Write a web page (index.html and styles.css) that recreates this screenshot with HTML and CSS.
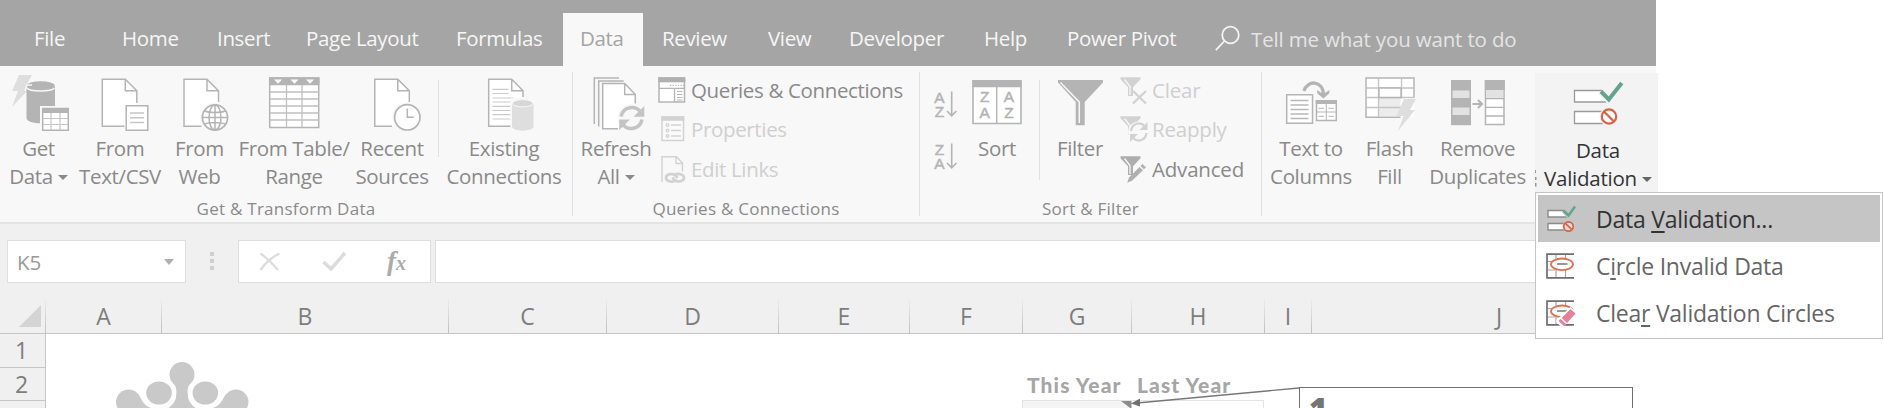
FILE: index.html
```html
<!DOCTYPE html>
<html lang="en">
<head>
    <meta charset="UTF-8">
    <meta name="viewport" content="width=device-width, initial-scale=1.0">
    <title>Data Validation</title>
    <link rel="stylesheet" href="styles.css">
</head>
<body>
    <div class="window">
        <nav class="tabs">
            <a class="tab tab-file">File</a>
            <a class="tab tab-home">Home</a>
            <a class="tab tab-insert">Insert</a>
            <a class="tab tab-layout">Page Layout</a>
            <a class="tab tab-formulas">Formulas</a>
            <a class="tab tab-data active">Data</a>
            <a class="tab tab-review">Review</a>
            <a class="tab tab-view">View</a>
            <a class="tab tab-developer">Developer</a>
            <a class="tab tab-help">Help</a>
            <a class="tab tab-pivot">Power Pivot</a>
            <div class="search">
                <svg width="26" height="28" viewBox="0 0 26 28" fill="none" stroke="#f4f4f4" stroke-width="1.8"><circle cx="15.5" cy="10" r="8.3"/><path d="M9.5 16L.8 25.2"/></svg>
                <span>Tell me what you want to do</span>
            </div>
        </nav>

        <div class="ribbon">
            <section class="group group-get">
                <div class="tools">
                    <div class="btn w-get">
                        <svg class="icon" viewBox="8 72 60 60">
                            <path d="M18 75h13l-6 11h6L11 107l6-16h-6z" fill="#dedede"/>
                            <path d="M25.500 87v31c0 7 28.500 7 28.500 0V87z" fill="#b4b4b4"/>
                            <ellipse cx="39.700" cy="86" rx="14.200" ry="4.800" fill="#b4b4b4"/>
                            <path d="M26 88c3 4 24 4 27.500 0" fill="none" stroke="#f8f8f8" stroke-width="1.300"/>
                            <path d="M31 85h-5l-2 6" fill="none" stroke="#f8f8f8" stroke-width="1.500"/>
                            <path d="M39 106h31v26H39z" fill="#f8f8f8"/>
                            <path d="M41.700 108.500h25.600v21.800H41.700z" fill="#fff" stroke="#b4b4b4" stroke-width="1.500"/>
                            <path d="M41 108h27v5H41z" fill="#b4b4b4"/>
                            <path d="M42 118.500h25M42 124.500h25M50 113v17M59 113v17" stroke="#c4c4c4" stroke-width="1.200"/>
                        </svg>
                        <span>Get<br>Data <i class="caret"></i></span>
                    </div>
                    <div class="btn w-csv">
                        <svg class="icon" viewBox="89.500 72 60 60" fill="#fff" stroke="#b4b4b4" stroke-width="1.500">
                            <path d="M101.800 79.300h23.200l11.300 11.200v15H125.500v21h-23.700z" stroke="none"/>
                            <path d="M124 126.300h-22.200v-47h23l11.500 11.500V103M124.800 79.300v11.500h11.500" fill="none"/>
                            <path d="M125.700 105.800h21.600v24.500h-21.600z"/>
                            <path d="M129.500 113h14M129.500 117.700h14M129.500 122.500h14" stroke="#c6c6c6"/>
                        </svg>
                        <span>From<br>Text/CSV</span>
                    </div>
                    <div class="btn w-web">
                        <svg class="icon" viewBox="169.500 72 60 60" fill="#fff" stroke="#b4b4b4" stroke-width="1.500">
                            <path d="M183.500 79.300h23L218 90.500V126h-34.500z" stroke="none"/>
                            <path d="M201 126.300h-17.500v-47h23L218 90.800V102M206.500 79.300v11.500H218" fill="none"/>
                            <circle cx="214.500" cy="117.500" r="15" fill="#f8f8f8" stroke="none"/>
                            <circle cx="214.500" cy="117.500" r="12.600" stroke-width="1.700"/>
                            <path d="M202 117.500h25M214.500 105v25M204.500 111c4 2 16 2 20 0M204.500 124c4-2 16-2 20 0" fill="none"/>
                            <ellipse cx="214.500" cy="117.500" rx="6" ry="12.600" fill="none"/>
                        </svg>
                        <span>From<br>Web</span>
                    </div>
                    <div class="btn w-table">
                        <svg class="icon" viewBox="264 72 60 60">
                            <path d="M269.700 78h49v49.500h-49z" fill="#fff" stroke="#b4b4b4" stroke-width="1.500"/>
                            <path d="M269 77.300h50.500v8H269z" fill="#b4b4b4"/>
                            <path d="M274 79.500h8l-4 4.300zM290.500 79.500h8l-4 4.300zM306 79.500h8l-4 4.300z" fill="#fff"/>
                            <path d="M270 92h49M270 99h49M270 106h49M270 113h49M270 120h49M286.500 85v42M302 85v42" stroke="#c0c0c0" stroke-width="1.300"/>
                        </svg>
                        <span>From Table/<br>Range</span>
                    </div>
                    <div class="btn w-recent">
                        <svg class="icon" viewBox="362 72 60 60" fill="#fff" stroke="#b4b4b4" stroke-width="1.500">
                            <path d="M374.800 79.300h23L409.300 90.500V126h-34.500z" stroke="none"/>
                            <path d="M392 126.300h-17.200v-47h23l11.500 11.500V102M397.800 79.300v11.500h11.500" fill="none"/>
                            <circle cx="407.300" cy="117.300" r="15" fill="#f8f8f8" stroke="none"/>
                            <circle cx="407.300" cy="117.300" r="12.700" stroke-width="1.700"/>
                            <path d="M407.300 108.500v8.800h6.500" fill="none"/>
                        </svg>
                        <span>Recent<br>Sources</span>
                    </div>
                    <div class="divider short"></div>
                    <div class="btn w-existing">
                        <svg class="icon" viewBox="474 72 60 60">
                            <path d="M488.700 79.300h23l11.300 11.200V126h-34.300z" fill="#fff"/>
                            <path d="M511 126.300h-22.300v-47h23l11.300 11.500V97M511.700 79.300v11.500H523" fill="none" stroke="#b4b4b4" stroke-width="1.500"/>
                            <path d="M492.500 89.300h16M492.500 93.500h16M492.500 98h21M492.500 102h18M492.500 106.300h18M492.500 110.500h18M492.500 114.700h18M492.500 119h18" stroke="#cbcbcb" stroke-width="1.200"/>
                            <path d="M510.500 98H535v34h-24.500z" fill="#f8f8f8"/>
                            <path d="M512 103.500v23c0 5.500 21.500 5.500 21.500 0v-23z" fill="#dedede"/>
                            <ellipse cx="522.700" cy="103.300" rx="10.200" ry="3.600" fill="#d6d6d6" stroke="#f8f8f8"/>
                        </svg>
                        <span>Existing<br>Connections</span>
                    </div>
                </div>
                <div class="group-name">Get &amp; Transform Data</div>
            </section>
            <div class="divider"></div>

            <section class="group group-queries">
                <div class="tools">
                    <div class="btn w-refresh">
                        <svg class="icon" viewBox="586 72 60 60">
                            <path d="M594.300 124V78H619M598.700 126.500V81h25" fill="none" stroke="#b4b4b4" stroke-width="1.500"/>
                            <path d="M602.700 83.500h22l10.600 10.800V129h-32.600z" fill="#fff"/>
                            <path d="M618 128.800h-15.300V83.500h22l10.600 11v9M624.700 83.500v11h10.600" fill="none" stroke="#b4b4b4" stroke-width="1.500"/>
                            <circle cx="631.500" cy="118" r="14" fill="#f8f8f8"/>
                            <path d="M621 116.500c2-10 14.500-12 20-4M642 119.500c-2 10-14.500 12-20 4" fill="none" stroke="#c4c4c4" stroke-width="3.600"/>
                            <path d="M644.300 106v10.800H633.500zM619.200 130.300v-10.800H630z" fill="#c4c4c4"/>
                        </svg>
                        <span>Refresh<br>All <i class="caret"></i></span>
                    </div>
                    <div class="list list-queries">
                        <div class="item">
                            <svg width="28" height="26" viewBox="658 77 28 26"><path d="M659 78h25.500v24H659z" fill="#fff" stroke="#b4b4b4" stroke-width="1.500"/><path d="M658.300 77.300h27v5h-27z" fill="#b0b0b0"/><path d="M659 88.300h25M674.500 88v14" stroke="#b4b4b4" stroke-width="1.300"/><path d="M670 85.300h14" stroke="#bbb" stroke-width="1.300" stroke-dasharray="1.300 1.300"/><path d="M677 91.500h5.500M677 94.500h5.500M677 97.500h5.500M677 100h5.500" stroke="#b8b8b8"/></svg>
                            <span>Queries &amp; Connections</span>
                        </div>
                        <div class="item off">
                            <svg width="28" height="26" viewBox="658 117 28 26"><path d="M662 118h21.500v23.500H662z" fill="#fafafa" stroke="#d2d2d2" stroke-width="1.500"/><path d="M661.300 117.300h23v4.500h-23z" fill="#d2d2d2"/><path d="M671 126h10M671 131.500h10M671 137h10" stroke="#d2d2d2" stroke-width="1.300"/><g fill="none" stroke="#d2d2d2" stroke-width="1.300"><circle cx="667.500" cy="126" r="1.400"/><circle cx="667.500" cy="131.500" r="1.400"/><circle cx="667.500" cy="137" r="1.400"/></g></svg>
                            <span>Properties</span>
                        </div>
                        <div class="item off">
                            <svg width="28" height="28" viewBox="658 156 28 28" fill="none" stroke="#d2d2d2"><path d="M662 182v-25.200h14.500l6 6.200v8.500M676 157v6.500h6.500" stroke-width="1.400"/><g stroke-width="2.800"><path d="M675.500 180.500c-2 1.800-9.500 1.500-9.500-2.700s7.500-4.600 9.500-2.300l2 2.500"/><path d="M674.500 175c2-1.800 9.500-1.500 9.500 2.700s-7.500 4.600-9.500 2.300l-2-2.500"/></g></svg>
                            <span>Edit Links</span>
                        </div>
                    </div>
                </div>
                <div class="group-name">Queries &amp; Connections</div>
            </section>
            <div class="divider"></div>

            <section class="group group-sort">
                <div class="tools">
                    <svg class="az" width="32" height="90" viewBox="930 86 32 90">
                        <g class="az-text"><text x="939.500" y="103">A</text><text x="939.500" y="117">Z</text><text x="939.500" y="155">Z</text><text x="939.500" y="169">A</text></g>
                        <path d="M951.700 91.500v24M947 111l4.700 4.900 4.700-4.900M951.700 143.500v24M947 163l4.700 4.900 4.700-4.900" fill="none" stroke="#b4b4b4" stroke-width="1.600"/>
                    </svg>
                    <div class="btn w-sort">
                        <svg class="icon" viewBox="967 72 60 60">
                            <path d="M973 81h48v42.500h-48z" fill="#fff" stroke="#b4b4b4" stroke-width="1.600"/>
                            <path d="M972.300 80h49.300v7.300h-49.300z" fill="#b4b4b4"/>
                            <path d="M996.700 87v36" stroke="#b4b4b4" stroke-width="1.400"/>
                            <g class="az-text"><text x="984.700" y="102">Z</text><text x="984.700" y="118">A</text><text x="1009" y="102">A</text><text x="1009" y="118">Z</text></g>
                        </svg>
                        <span>Sort</span>
                    </div>
                    <div class="divider mid"></div>
                    <div class="btn w-filter">
                        <svg class="icon" viewBox="1050 72 60 60">
                            <path d="M1058 80h45v2.500L1084.700 102v23.300h-9V102L1058 82.500z" fill="#b4b4b4"/>
                            <path d="M1060.500 82.500l18.800 19.500v21" fill="none" stroke="#f8f8f8" stroke-width="1.500"/>
                        </svg>
                        <span>Filter</span>
                    </div>
                    <div class="list list-sort">
                        <div class="item off">
                            <svg width="28" height="28" viewBox="1121 77 28 28"><path d="M1121.500 77.300h20v2l-7.500 8V96h-5v-8.700l-7.500-8z" fill="#d2d2d2"/><path d="M1125.500 79.500l5.500 7V95" fill="none" stroke="#f8f8f8" stroke-width="1.300"/><path d="M1134 91l13 12.500M1147 91l-13 12.500" stroke="#d2d2d2" stroke-width="2.400"/></svg>
                            <span>Clear</span>
                        </div>
                        <div class="item off">
                            <svg width="28" height="28" viewBox="1121 77 28 28"><path d="M1121.500 77.300h20v2l-7.500 8V96h-5v-8.700l-7.500-8z" fill="#d2d2d2"/><path d="M1125.500 79.500l5.500 7V95" fill="none" stroke="#f8f8f8" stroke-width="1.300"/><circle cx="1139.500" cy="93" r="10.500" fill="#f8f8f8"/><path d="M1132 92c1-8 10-10 14-4M1147.500 94c-1 8-10 10-14 4" fill="none" stroke="#d2d2d2" stroke-width="2.200"/><path d="M1148.500 83v8h-8zM1131 103v-8h8z" fill="#d2d2d2"/></svg>
                            <span>Reapply</span>
                        </div>
                        <div class="item">
                            <svg width="28" height="28" viewBox="1121 77 28 28"><path d="M1121.500 77.300h20v2l-7.500 8V96h-5v-8.700l-7.500-8z" fill="#adadad"/><path d="M1125.500 79.500l5.500 7V95" fill="none" stroke="#f8f8f8" stroke-width="1.300"/><path d="M1143.500 85l3.500 3.300-2 2-3.500-3.300zM1140.500 88l3.500 3.300-11 10.500-4.800 2 1.800-5.200z" fill="#b0b0b0"/></svg>
                            <span>Advanced</span>
                        </div>
                    </div>
                </div>
                <div class="group-name">Sort &amp; Filter</div>
            </section>
            <div class="divider"></div>

            <section class="group group-tools">
                <div class="tools">
                    <div class="btn w-columns">
                        <svg class="icon" viewBox="1281 72 60 60">
                            <path d="M1286.700 94.700h25.800v28.500h-25.800z" fill="#fff" stroke="#b4b4b4" stroke-width="1.500"/>
                            <path d="M1290.500 100.500h18M1290.500 105h18M1290.500 109.500h18M1290.500 114h18M1290.500 118.500h18" stroke="#b8b8b8" stroke-width="1.300"/>
                            <path d="M1316.500 101h19.800v19.500h-19.800z" fill="#fff" stroke="#b4b4b4" stroke-width="1.500"/>
                            <path d="M1315.700 100h21.300v4h-21.300z" fill="#b4b4b4"/>
                            <path d="M1326.300 104v16M1316 112h20.500" stroke="#b4b4b4"/>
                            <path d="M1318.500 108.300h5.500M1328.500 108.300h5.500M1318.500 116.300h5.500M1328.500 116.300h5.500" stroke="#b4b4b4"/>
                            <path d="M1304 91c3-11 19-11.500 19.500 4" fill="none" stroke="#b4b4b4" stroke-width="3.300"/>
                            <path d="M1317 90l6.300 4 6.300-4-.5 3.500-5.700 5-6-5z" fill="#b4b4b4"/>
                        </svg>
                        <span>Text to<br>Columns</span>
                    </div>
                    <div class="btn w-flash">
                        <svg class="icon" viewBox="1359.500 72 60 60">
                            <path d="M1365.500 78h48v39h-48z" fill="#fff"/>
                            <path d="M1378 98h22v18h-22z" fill="#ececec"/>
                            <path d="M1400 117.300h-34.500V78h48v19" fill="none" stroke="#b4b4b4" stroke-width="1.500"/>
                            <path d="M1366 88h48M1366 97.500h48M1366 107.500h35M1378 78v39M1401 78v20" stroke="#c4c4c4" stroke-width="1.300"/>
                            <path d="M1378.500 88h22v9.500h-22z" fill="#fff" stroke="#b4b4b4" stroke-width="1.400"/>
                            <path d="M1403.500 99h12l-6 11h5l-17 21 5.500-15h-7z" fill="#dedede"/>
                        </svg>
                        <span>Flash<br>Fill</span>
                    </div>
                    <div class="btn w-remove">
                        <svg class="icon" viewBox="1447.500 72 60 60">
                            <path d="M1450.500 80h20v45.200h-20z" fill="#b4b4b4"/>
                            <path d="M1452 90.500h17v7.500h-17zM1452 107.500h17v7.500h-17z" fill="#e2e2e2"/>
                            <path d="M1485 81h18.500v43.500H1485z" fill="#fff" stroke="#b4b4b4" stroke-width="1.500"/>
                            <path d="M1484.300 80h20v10h-20z" fill="#b4b4b4"/>
                            <path d="M1485.700 90h17v8h-17z" fill="#e2e2e2"/>
                            <path d="M1485 98.700h19M1485 107.300h19M1485 116h19" stroke="#b4b4b4" stroke-width="1.300"/>
                            <path d="M1472 104h9M1477.500 100l4 4-4 4" fill="none" stroke="#b4b4b4" stroke-width="2"/>
                        </svg>
                        <span>Remove<br>Duplicates</span>
                    </div>
                </div>
            </section>
        </div>

        <div class="formula-bar">
            <div class="box name-box"><span>K5</span><i class="caret"></i></div>
            <div class="dots"><i></i><i></i><i></i></div>
            <div class="box fx-box">
                <svg width="22" height="20" viewBox="0 0 22 20" fill="none" stroke="#dcdcdc" stroke-width="2.300"><path d="M1.500 1.500C8 6 14 12 19 18M20.500 1.500C13 5 7 10 1.500 18"/></svg>
                <svg width="24" height="21" viewBox="0 0 24 21" fill="none" stroke="#dcdcdc" stroke-width="3.500"><path d="M1.500 11l7.500 7L23 2"/></svg>
                <span class="fx">f<small>x</small></span>
            </div>
            <div class="box input-box"></div>
        </div>

        <div class="columns">
            <div class="corner"><svg width="22" height="22" viewBox="0 0 22 22"><path d="M22 0v22H0z" fill="#d4d4d4"/></svg></div>
            <div class="col col-a">A</div>
            <div class="col col-b">B</div>
            <div class="col col-c">C</div>
            <div class="col col-d">D</div>
            <div class="col col-e">E</div>
            <div class="col col-f">F</div>
            <div class="col col-g">G</div>
            <div class="col col-h">H</div>
            <div class="col col-i">I</div>
            <div class="col col-j">J</div>
        </div>

        <div class="sheet">
            <div class="row-heads">
                <div>1</div>
                <div>2</div>
            </div>
            <div class="cells">
                <div class="row"></div>
                <div class="row titles"><b class="col-g">This Year</b><b class="col-h">Last Year</b></div>
                <div class="row values"><span class="col-g"></span><span class="col-h"></span></div>
            </div>
            <svg class="logo" width="140" height="50" viewBox="112 358 140 50">
                <g fill="#c9c9c9">
                    <circle cx="182" cy="374.500" r="12.500"/>
                    <path d="M170.500 379c3 5 6 6 6 14v15h11v-15c0-8 3-9 6-14z"/>
                    <circle cx="128.500" cy="402" r="12.500"/>
                    <circle cx="236" cy="402" r="12.500"/>
                    <path d="M138 394c4 6 5 11 13 14h-14zM226 394c-4 6-5 11-13 14h14z"/>
                    <path d="M176.500 393c0 7-3 11-8 15h27c-5-4-8-8-8-15z"/>
                    <ellipse cx="159" cy="393" rx="12.800" ry="11.500"/>
                    <ellipse cx="205.300" cy="393" rx="12.800" ry="11.500"/>
                </g>
            </svg>
            <svg class="pointer" width="180" height="25" viewBox="1120 383 180 25">
                <path d="M1121 401h10.500v8z" fill="#8c8c8c"/>
                <path d="M1299 388l-162 15" stroke="#777" stroke-width="1.300"/>
                <path d="M1131 403.500l9-5v8z" fill="#707070"/>
            </svg>
            <div class="note">1</div>
        </div>
    </div>

    <div class="validation">
        <svg class="icon" viewBox="1567 74 60 60">
            <path d="M1573.500 90.500h27l5 6-1 5.500h-31zM1573.500 111.500h28v12h-28z" fill="#fff" stroke="#9a9a9a" stroke-width="1.300"/>
            <path d="M1600 91.500l8 8.500 12.500-16.500" fill="none" stroke="#f3f3f3" stroke-width="7"/>
            <path d="M1600 91.500l7.800 8 13-16.500" fill="none" stroke="#62a58d" stroke-width="4"/>
            <circle cx="1608" cy="116.500" r="9.500" fill="#f3f3f3"/>
            <circle cx="1608" cy="116.500" r="7.200" fill="#fff" stroke="#dc6243" stroke-width="2.200"/>
            <path d="M1603 111.500l10 10" stroke="#dc6243" stroke-width="2.200"/>
        </svg>
        <span>Data<br>Validation <i class="caret"></i></span>
        <svg class="edge" width="3" height="18" viewBox="0 0 3 18" fill="#999"><path d="M0 0h1v3H0zM0 7h1.500v3H0zM0 13h1.500v3.500H0z"/></svg>
    </div>

    <ul class="menu">
        <li class="selected">
            <svg width="30" height="28" viewBox="1546 201 30 28">
                <path d="M1548 206.500h17l4 3-1.500 3.500H1548zM1548 219.500h18v6.500h-18z" fill="#fff" stroke="#8a8a8a" stroke-width="1.400"/>
                <path d="M1563.500 206.500l5 5 7-9" fill="none" stroke="#c5c5c5" stroke-width="5"/>
                <path d="M1563.500 206.500l5 5 6.500-9" fill="none" stroke="#62a58d" stroke-width="2.500"/>
                <circle cx="1568.500" cy="222.500" r="6" fill="#c5c5c5"/>
                <circle cx="1568.500" cy="222.500" r="4.700" fill="#ddd" stroke="#dc6243" stroke-width="1.700"/>
                <path d="M1565.300 219.200l6.500 6.500" stroke="#dc6243" stroke-width="1.700"/>
            </svg>
            <span>Data <u>V</u>alidation...</span>
        </li>
        <li>
            <svg width="30" height="28" viewBox="1546 250 30 28">
                <path d="M1547 259.500h8M1547 268h8M1556 252v24M1565.500 252v24" stroke="#a8a8a8" stroke-width="1.200"/>
                <path d="M1574 252.200h-27v23.600h27" fill="none" stroke="#6e6e6e" stroke-width="1.700"/>
                <ellipse cx="1562" cy="262.300" rx="11" ry="5.800" fill="#fff" stroke="#e0714f" stroke-width="1.800"/>
                <path d="M1557 262h10.500" stroke="#777" stroke-width="1.500"/>
            </svg>
            <span>C<u>i</u>rcle Invalid Data</span>
        </li>
        <li>
            <svg width="30" height="28" viewBox="1546 297 30 28">
                <path d="M1547 306.500h8M1547 315h8M1556 299v24M1565.500 299v24" stroke="#a8a8a8" stroke-width="1.200"/>
                <path d="M1574 299.200h-27v23.600h27" fill="none" stroke="#6e6e6e" stroke-width="1.700"/>
                <ellipse cx="1562" cy="309.300" rx="11" ry="5.800" fill="#fff" stroke="#e0714f" stroke-width="1.800"/>
                <path d="M1557 309h10.500" stroke="#777" stroke-width="1.500"/>
                <path d="M1570.500 305l6 5.500-13 14h-3l-4-4.500v-2z" fill="#fff"/>
                <path d="M1570.500 307l5 4.500-8.500 9.500-5.300-5zM1560.700 317l5.300 5-2 2-5.500-5z" fill="#e5829a"/>
            </svg>
            <span>Clea<u>r</u> Validation Circles</span>
        </li>
    </ul>
</body>
</html>
```
FILE: styles.css
```css
* {
    box-sizing: border-box;
}

body {
    margin: 0;
    background-color: #fff;
    font-family: "Open Sans", "Noto Sans", sans-serif;
    font-size: 20.5px;
    line-height: 28px;
    color: #8a8a8a;
    position: relative;
    height: 408px;
    overflow: hidden;
}

.window {
    width: 1656px;
    height: 408px;
    overflow: hidden;
}

.caret {
    display: inline-block;
    border: 5px solid transparent;
    border-top-color: currentColor;
    border-bottom: 0;
    vertical-align: 4px;
}

/* tabs */
.tabs {
    display: flex;
    height: 66px;
    background-color: #a5a5a5;
    color: #f6f6f6;
    letter-spacing: -0.35px;
    white-space: nowrap;
}

.tab {
    padding: 24px 0 0 19px;
    flex: none;
}

.tab-file {
    width: 103px;
    padding-left: 34px;
}

.tab-home {
    width: 95px;
}

.tab-insert {
    width: 89px;
}

.tab-layout {
    width: 150px;
}

.tab-formulas {
    width: 126px;
}

.tab-data {
    width: 80px;
}

.tab-review {
    width: 106px;
    padding-left: 19px;
}

.tab-view {
    width: 81px;
}

.tab-developer {
    width: 135px;
}

.tab-help {
    width: 83px;
}

.tab-pivot {
    width: 167px;
}

.active {
    margin-top: 13px;
    padding: 11px 0 0 17px;
    background-color: #f8f8f8;
    color: #a5a5a5;
}

.search {
    display: flex;
    gap: 10px;
    padding-top: 25px;
    color: #e4e4e4;
}

.search span {
    letter-spacing: -0.15px;
}

/* ribbon */
.ribbon {
    display: flex;
    height: 158px;
    background-color: #f8f8f8;
    border-bottom: 2px solid #e4e4e4;
    letter-spacing: -0.35px;
}

.group {
    flex: none;
}

.group-get {
    width: 572px;
}

.group-queries {
    width: 346px;
}

.group-sort {
    width: 341px;
}

.group-tools {
    width: 394px;
}

.tools {
    display: flex;
    height: 131px;
}

.group-name {
    font-size: 17px;
    line-height: 24px;
    letter-spacing: 0.25px;
    text-align: center;
}

.divider {
    flex: none;
    width: 1px;
    height: 144px;
    margin-top: 6px;
    background-color: #e0e0e0;
}

.short {
    height: 77px;
    margin: 14px 4px 0 6px;
}

.mid {
    height: 100px;
    margin: 14px 0 0 7px;
}

.btn {
    flex: none;
    display: flex;
    flex-direction: column;
    align-items: center;
    gap: 2px;
    padding-top: 6px;
    text-align: center;
    white-space: nowrap;
}

.icon {
    width: 60px;
    height: 60px;
    flex: none;
}

.w-get {
    width: 77px;
}

.w-csv {
    width: 86px;
}

.w-web {
    width: 73px;
}

.w-table {
    width: 116px;
}

.w-recent {
    width: 80px;
}

.w-existing {
    width: 122px;
}

.w-refresh {
    width: 78px;
    margin-left: 4px;
}

.w-sort {
    width: 70px;
}

.w-filter {
    width: 80px;
}

.w-columns {
    width: 98px;
}

.w-flash {
    width: 59px;
}

.w-remove {
    width: 117px;
}

.list {
    display: flex;
    flex-direction: column;
    gap: 11.4px;
    padding-top: 10px;
}

.list-queries {
    margin-left: 3px;
}

.list-queries .item {
    gap: 5px;
}

.list-sort {
    letter-spacing: -0.2px;
}

.item {
    display: flex;
    gap: 4px;
    height: 28px;
    white-space: nowrap;
}

.item svg {
    margin-top: 1px;
}

.off {
    color: #cfcfcf;
}

.az {
    margin: 20px 0 0 10px;
}

.az-text {
    font-family: "Liberation Sans", Arial, sans-serif;
    font-size: 15.5px;
    fill: #b4b4b4;
    stroke: #b4b4b4;
    stroke-width: 0.5px;
    text-anchor: middle;
    letter-spacing: 0;
}

/* formula bar */
.formula-bar {
    display: flex;
    height: 76px;
    padding: 16px 0 0 7px;
    background-color: #f0f0f0;
}

.box {
    height: 43px;
    background-color: #fff;
    border: 1.5px solid #dedede;
}

.name-box {
    display: flex;
    align-items: center;
    justify-content: space-between;
    width: 179px;
    padding: 0 11px 0 9px;
    color: #999;
}

.name-box .caret {
    color: #b0b0b0;
    border-width: 6px 5.5px 0;
}

.dots {
    display: flex;
    flex-direction: column;
    gap: 3px;
    margin: 12px 24px 0 24px;
}

.dots i {
    width: 4px;
    height: 4px;
    background-color: #cfcfcf;
}

.fx-box {
    display: flex;
    align-items: center;
    width: 193px;
    padding-left: 20px;
    margin-right: 4px;
}

.fx-box svg + svg {
    margin-left: 41px;
}

.fx {
    margin-left: 41px;
    font: italic bold 27px/30px "Liberation Serif", serif;
    color: #ababab;
}

.fx small {
    font-size: 20px;
}

.input-box {
    flex: 1;
}

/* grid */
.columns {
    display: flex;
    height: 34px;
    background-color: #f0f0f0;
    border-bottom: 1.5px solid #c6c6c6;
    font-size: 23px;
    line-height: 32px;
    color: #7d7d7d;
}

.corner,
.col {
    flex: none;
    text-align: center;
    border-right: 1px solid;
    border-image: linear-gradient(#ececec, #bfbfbf) 1;
}

.corner {
    width: 46px;
    padding: 5px 4px 0 0;
    text-align: right;
    line-height: 0;
}

.col-a {
    width: 116px;
}

.col-b {
    width: 287px;
}

.col-c {
    width: 158px;
}

.col-d {
    width: 172px;
}

.col-e {
    width: 131px;
}

.col-f {
    width: 113px;
}

.col-g {
    width: 109px;
}

.col-h {
    width: 133px;
}

.col-i {
    width: 47px;
}

.col-j {
    width: 375px;
}

.sheet {
    display: flex;
    height: 74px;
    overflow: hidden;
}

.row-heads {
    width: 46px;
    background-color: #f0f0f0;
    border-right: 1.5px solid #c6c6c6;
    font-size: 23px;
    line-height: 33px;
    text-align: center;
    color: #7d7d7d;
}

.row-heads div {
    height: 33.5px;
    padding-right: 2px;
    border-bottom: 1px solid #c6c6c6;
}

.row {
    display: flex;
    height: 33px;
    padding-left: 976px;
}

.titles {
    font: bold 21px/35px Lato, "Open Sans", sans-serif;
    letter-spacing: 1.1px;
    color: #a6a6a6;
    white-space: nowrap;
}

.titles b {
    padding-left: 5px;
}

.titles .col-h {
    padding-left: 6px;
}

.values {
    height: 8px;
}

.values span {
    border: 1px solid #e4e4e4;
    border-bottom: 0;
    background-color: #f4f4f4;
}

.values .col-h {
    border-left: 0;
    background-color: #fff;
}

.logo {
    position: absolute;
    left: 112px;
    top: 358px;
}

.pointer {
    position: absolute;
    left: 1120px;
    top: 383px;
}

.note {
    position: absolute;
    left: 1299px;
    top: 387px;
    width: 334px;
    height: 21px;
    padding: 3px 0 0 9px;
    overflow: hidden;
    background-color: #fff;
    border: 1.5px solid #707070;
    border-bottom: 0;
    font: 800 32px/36px "Open Sans", sans-serif;
    color: #757575;
}

/* Data Validation button and its menu, lifted over the window */
.validation {
    position: absolute;
    left: 1535px;
    top: 73px;
    width: 123px;
    height: 119px;
    display: flex;
    flex-direction: column;
    align-items: center;
    gap: 2px;
    padding: 1px 0 0 3px;
    background-color: #f3f3f3;
    color: #333;
    letter-spacing: -0.25px;
    text-align: center;
    white-space: nowrap;
}

.validation .caret {
    color: #666;
}

.edge {
    position: absolute;
    left: 0;
    top: 97px;
}

.menu {
    position: absolute;
    left: 1535px;
    top: 192px;
    width: 348px;
    height: 147px;
    margin: 0;
    padding: 2px;
    list-style: none;
    background-color: #fff;
    border: 1.5px solid #c4c4c4;
    font-size: 23px;
    letter-spacing: -0.25px;
    color: #666;
}

.menu li {
    display: flex;
    align-items: center;
    gap: 20px;
    height: 47px;
    padding-left: 8px;
}

.menu .selected {
    background-color: #c5c5c5;
    color: #333;
}

.menu u {
    text-decoration-thickness: 1.5px;
    text-underline-offset: 3px;
}
```
